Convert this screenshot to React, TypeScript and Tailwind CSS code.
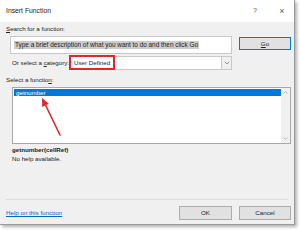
export default function App() {
  return (
    <div className="w-[300px] h-[230px] bg-white overflow-hidden">
      <div className="relative w-[295px] h-[225px] bg-[#f0f0f0] border-r border-b border-[#9a9a9a] shadow-[2px_2px_3px_rgba(0,0,0,0.3)] flex flex-col font-['Liberation_Sans',Arial,sans-serif] text-[6.2px] text-[#222]">
        {/* title bar */}
        <div className="h-[22px] bg-white flex items-center pl-[6px] text-[6.8px] shrink-0">
          <span>Insert Function</span>
          <span className="ml-auto w-[10px] text-center text-[7px] text-[#555]">?</span>
          <span className="ml-[17px] mr-[7px] w-[10px] text-center text-[9px] leading-none text-[#555]">×</span>
        </div>

        <div className="mt-[3px] h-[8px] leading-[8px] pl-[6px]">
          <span className="underline">S</span>earch for a function:
        </div>

        <div className="mt-[3px] flex pl-[10px]">
          <div className="w-[222px] h-[18px] bg-white border border-[#c8c8c8] pt-[3px] pl-[3px]">
            <span className="bg-[#cccccc] leading-[8px] inline-block px-[1px] text-[6.4px] whitespace-nowrap">
              Type a brief description of what you want to do and then click Go
            </span>
          </div>
          <div className="ml-[7px] mt-[1px] w-[52px] h-[13px] border border-[#0078d7] bg-[#e1e1e1] flex items-center justify-center">
            <span>
              <span className="underline">G</span>o
            </span>
          </div>
        </div>

        <div className="mt-[2px] h-[14px] flex items-center pl-[12px]">
          <span className="w-[57px] shrink-0 whitespace-nowrap">
            Or select a <span className="underline">c</span>ategory:
          </span>
          <div className="w-[163px] h-[14px] bg-white border border-[#c8c8c8] flex items-center">
            <span className="h-[15px] -mt-[1px] -ml-[1px] px-[3px] border-2 border-[#e4262a] flex items-center whitespace-nowrap">
              User Defined
            </span>
            <div className="ml-auto w-[10px] h-full bg-[#f0f0f0] border-l border-[#c8c8c8] flex items-center justify-center">
              <svg width="6" height="4" viewBox="0 0 6 4">
                <path d="M0.8 0.8 L3 3 L5.2 0.8" fill="none" stroke="#777" strokeWidth="0.8" />
              </svg>
            </div>
          </div>
        </div>

        <div className="mt-[6px] h-[8px] leading-[8px] pl-[6px]">
          Select a functio<span className="underline">n</span>:
        </div>

        <div className="mt-[3px] ml-[12px] w-[279px] h-[57px] bg-white border border-[#a8a8a8] flex">
          <div className="flex-1 pt-[1px] pl-[1px]">
            <div className="h-[7px] bg-[#0078d7] text-white leading-[7px] pl-[2px]">getnumber</div>
          </div>
          <div className="w-[9px] bg-[#f0f0f0] flex flex-col items-center justify-between py-[3px]">
            <svg width="5" height="3" viewBox="0 0 5 3">
              <path d="M0.6 2.5 L2.5 0.6 L4.4 2.5" fill="none" stroke="#999" strokeWidth="0.7" />
            </svg>
            <svg width="5" height="3" viewBox="0 0 5 3">
              <path d="M0.6 0.5 L2.5 2.4 L4.4 0.5" fill="none" stroke="#999" strokeWidth="0.7" />
            </svg>
          </div>
        </div>

        <div className="mt-[2px] h-[8px] leading-[8px] pl-[12px] font-bold">getnumber(cellRef)</div>
        <div className="mt-[1px] h-[8px] leading-[8px] pl-[12px]">No help available.</div>

        <div className="mt-[36px] mx-[6px] border-t border-[#dcdcdc]" />

        <div className="mt-[6px] h-[14px] flex items-center pl-[6px] pr-[3px]">
          <span className="text-[#0066cc] underline whitespace-nowrap">Help on this function</span>
          <div className="ml-auto w-[53px] h-[14px] bg-[#e1e1e1] border border-[#adadad] flex items-center justify-center">
            OK
          </div>
          <div className="ml-[7px] w-[52px] h-[14px] bg-[#e1e1e1] border border-[#adadad] flex items-center justify-center">
            Cancel
          </div>
        </div>

        {/* annotation arrow */}
        <svg className="absolute left-0 top-0 pointer-events-none" width="295" height="225" viewBox="0 0 295 225">
          <line x1="60" y1="135" x2="45" y2="104" stroke="#e4262a" strokeWidth="1.6" strokeLinecap="round" />
          <polygon points="42,98 48.8,103.8 42.2,106.9" fill="#e4262a" />
        </svg>
      </div>
    </div>
  );
}
